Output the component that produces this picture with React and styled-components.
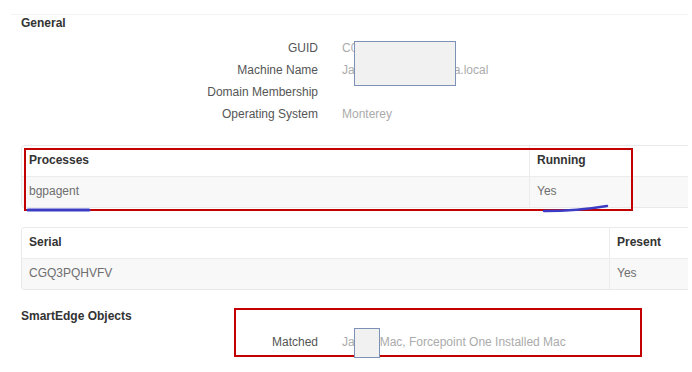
import React from 'react';
import styled, { createGlobalStyle } from 'styled-components';

const GlobalStyle = createGlobalStyle`
  html, body {
    margin: 0;
    padding: 0;
    background: #fff;
    overflow: hidden;
  }
  body {
    font-family: "Liberation Sans", Arial, sans-serif;
    font-size: 12px;
    color: #555;
  }
`;

const general = [
  { label: 'GUID', value: ['C0'] },
  { label: 'Machine Name', value: ['Ja', 99, 'a.local'] },
  { label: 'Domain Membership', value: [] },
  { label: 'Operating System', value: ['Monterey'] },
];

const processes = {
  columns: ['Processes', 'Running'],
  first: 507,
  rows: [['bgpagent', 'Yes']],
};

const serials = {
  columns: ['Serial', 'Present'],
  first: 587,
  rows: [['CGQ3PQHVFV', 'Yes']],
};

const smartEdge = [{ label: 'Matched', value: ['Ja', 25, 'Mac, Forcepoint One Installed Mac'] }];

const Page = styled.div`
  position: relative;
  width: 692px;
  height: 372px;
  box-sizing: border-box;
  padding: 14px 4px 0 11px;
`;

const TopRule = styled.div`
  height: 1px;
  background: #f3f3f3;
`;

const Content = styled.div`
  padding-left: 10px;
`;

const SectionTitle = styled.div`
  margin-top: ${(props) => props.top || 0}px;
  font-weight: bold;
  line-height: 16px;
  color: #333;
`;

const Fields = styled.div`
  display: grid;
  grid-template-columns: 297px 1fr;
  column-gap: 24px;
  margin-top: ${(props) => props.top || 6}px;
  line-height: 22px;
`;

const Label = styled.div`
  text-align: right;
  color: #555;
`;

const Value = styled.div`
  color: #ababab;
  white-space: nowrap;
`;

const Hidden = styled.span`
  display: inline-block;
  width: ${(props) => props.width}px;
`;

const Table = styled.div`
  display: grid;
  grid-template-columns: ${(props) => props.first}px 1fr;
  margin-top: ${(props) => props.top}px;
  border: 1px solid #e9e9e9;
  border-right: none;
  border-radius: 4px 0 0 4px;
  overflow: hidden;
`;

const Cell = styled.div`
  padding: 6px 7px 8px;
  line-height: 16px;
  background: ${(props) => (props.head ? '#fff' : '#f8f8f8')};
  color: ${(props) => (props.head ? '#333' : '#6e6e6e')};
  font-weight: ${(props) => (props.head ? 'bold' : 'normal')};
  border-left: ${(props) => (props.first ? 'none' : '1px solid #ececec')};
  border-bottom: ${(props) => (props.head ? '1px solid #ececec' : 'none')};
`;

const Outline = styled.div`
  position: absolute;
  left: ${(props) => props.x}px;
  top: ${(props) => props.y}px;
  width: ${(props) => props.w}px;
  height: ${(props) => props.h}px;
  box-sizing: border-box;
  border: 2px solid #c30000;
`;

const Redact = styled.div`
  position: absolute;
  left: ${(props) => props.x}px;
  top: ${(props) => props.y}px;
  width: ${(props) => props.w}px;
  height: ${(props) => props.h}px;
  box-sizing: border-box;
  background: #f1f1f1;
  border: 1.5px solid #7d90b6;
`;

const Marks = styled.svg`
  position: absolute;
  left: 0;
  top: 0;
  pointer-events: none;
`;

const FieldList = ({ items, top }) => (
  <Fields top={top}>
    {items.map((item) => (
      <React.Fragment key={item.label}>
        <Label>{item.label}</Label>
        <Value>
          {item.value.map((part, i) =>
            typeof part === 'number' ? <Hidden key={i} width={part} /> : <span key={i}>{part}</span>
          )}
        </Value>
      </React.Fragment>
    ))}
  </Fields>
);

const DataTable = ({ data, top }) => (
  <Table first={data.first} top={top}>
    {data.columns.map((col, i) => (
      <Cell head first={i === 0} key={col}>
        {col}
      </Cell>
    ))}
    {data.rows.map((row) =>
      row.map((text, i) => (
        <Cell first={i === 0} key={i}>
          {text}
        </Cell>
      ))
    )}
  </Table>
);

const App = () => {
  return (
    <>
      <GlobalStyle />
      <Page>
        <TopRule />
        <Content>
          <SectionTitle>General</SectionTitle>
          <FieldList items={general} />
          <DataTable data={processes} top={20} />
          <DataTable data={serials} top={19} />
          <SectionTitle top={18}>SmartEdge Objects</SectionTitle>
          <FieldList items={smartEdge} top={7} />
        </Content>

        <Redact x={354} y={41} w={102} h={45} />
        <Outline x={24} y={148} w={609} h={63} />
        <Outline x={234} y={308} w={408} h={49} />
        <Redact x={354} y={328} w={26} h={30} />

        <Marks width="692" height="372" viewBox="0 0 692 372">
          <path d="M28 210 L89 210" stroke="#3b3bc4" strokeWidth="3" strokeLinecap="round" fill="none" />
          <path d="M544 211 Q578 211 607 206" stroke="#3b3bc4" strokeWidth="2.5" strokeLinecap="round" fill="none" />
        </Marks>
      </Page>
    </>
  );
};

export default App;
